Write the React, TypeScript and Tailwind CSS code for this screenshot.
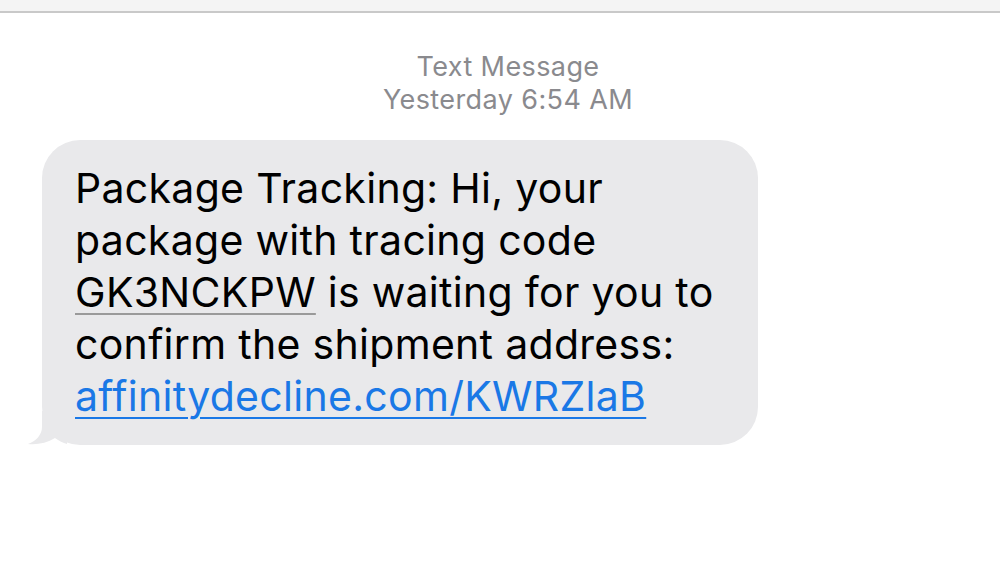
import React from 'react'

// bubble tail on the lower left of an incoming message
function Tail() {
  return (
    <svg
      className="absolute left-[-15px] bottom-0"
      width="40"
      height="34"
      viewBox="0 0 40 34"
    >
      <path
        d="M15 0 L15 16 C15 24 9 30 1 33 C10 34 20 32 28 27 C32 30 36 32 40 33 L40 0 Z"
        fill="#e9e9eb"
      />
    </svg>
  )
}

export default function App() {
  return (
    <div
      className="w-[1000px] h-[563px] bg-white overflow-hidden flex flex-col"
      style={{ fontFamily: 'Inter, "Liberation Sans", sans-serif' }}
    >
      {/* top bar */}
      <div className="h-[13px] bg-[#f4f4f4] border-b-2 border-[#c9c9c9] shrink-0" />

      {/* timestamp */}
      <div className="flex flex-col items-center pl-[16px] pt-[37px] text-[27px] leading-[33px] tracking-[0.4px] text-[#8a8a8e]">
        <div>Text Message</div>
        <div>Yesterday 6:54 AM</div>
      </div>

      {/* message bubble */}
      <div className="pl-[42px] pt-[24px]">
        <div className="relative w-[716px] bg-[#e9e9eb] rounded-[38px] pl-[33px] pr-[10px] pt-[22px] pb-[23px]">
          <Tail />
          <p className="relative text-[41px] leading-[52px] text-black tracking-[0.3px]">
            Package Tracking: Hi, your
            <br />
            package with tracing code
            <br />
            <span className="underline decoration-[#9a9a9a] decoration-2 underline-offset-[6px]">GK3NCKPW</span> is waiting for you to
            <br />
            confirm the shipment address:
            <br />
            <span className="text-[#1a78e6] underline decoration-2 underline-offset-[6px]">affinitydecline.com/KWRZlaB</span>
          </p>
        </div>
      </div>
    </div>
  )
}
